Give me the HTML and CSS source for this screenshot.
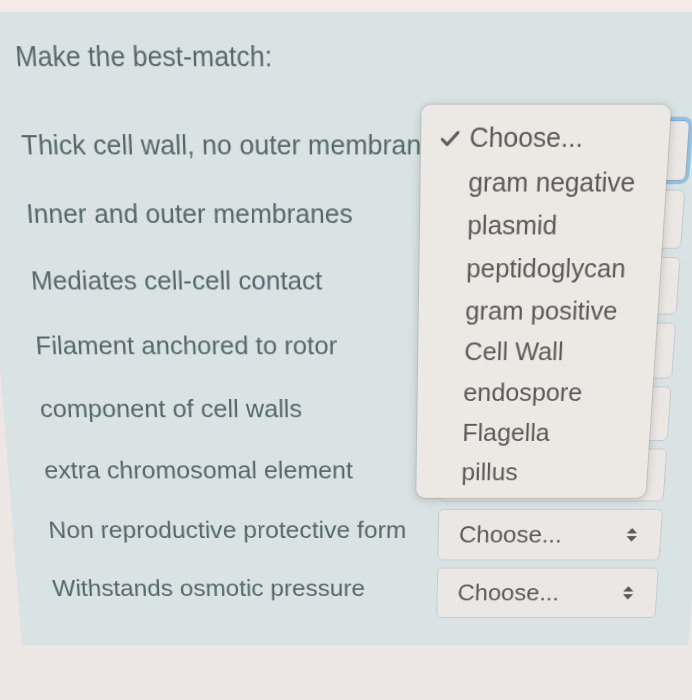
FILE: index.html
```html
<!DOCTYPE html>
<html lang="en">
<head>
<meta charset="utf-8">
<title>Make the best-match</title>
<link rel="stylesheet" href="styles.css">
</head>
<body>
<div class="screen">
<div class="panel">
  <h1 class="title">Make the best-match:</h1>
  <div class="rows">
    <div class="row">
      <span class="label">Thick cell wall, no outer membrane</span>
      <div class="select focused"><span>Choose...</span><svg class="arrows" viewBox="0 0 10 14"><path d="M5 0 L10 5.5 L0 5.5 Z M5 14 L10 8.5 L0 8.5 Z"/></svg></div>
    </div>
    <div class="row">
      <span class="label">Inner and outer membranes</span>
      <div class="select"><span>Choose...</span><svg class="arrows" viewBox="0 0 10 14"><path d="M5 0 L10 5.5 L0 5.5 Z M5 14 L10 8.5 L0 8.5 Z"/></svg></div>
    </div>
    <div class="row">
      <span class="label">Mediates cell-cell contact</span>
      <div class="select"><span>Choose...</span><svg class="arrows" viewBox="0 0 10 14"><path d="M5 0 L10 5.5 L0 5.5 Z M5 14 L10 8.5 L0 8.5 Z"/></svg></div>
    </div>
    <div class="row">
      <span class="label">Filament anchored to rotor</span>
      <div class="select"><span>Choose...</span><svg class="arrows" viewBox="0 0 10 14"><path d="M5 0 L10 5.5 L0 5.5 Z M5 14 L10 8.5 L0 8.5 Z"/></svg></div>
    </div>
    <div class="row">
      <span class="label">component of cell walls</span>
      <div class="select"><span>Choose...</span><svg class="arrows" viewBox="0 0 10 14"><path d="M5 0 L10 5.5 L0 5.5 Z M5 14 L10 8.5 L0 8.5 Z"/></svg></div>
    </div>
    <div class="row">
      <span class="label">extra chromosomal element</span>
      <div class="select"><span>Choose...</span><svg class="arrows" viewBox="0 0 10 14"><path d="M5 0 L10 5.5 L0 5.5 Z M5 14 L10 8.5 L0 8.5 Z"/></svg></div>
    </div>
    <div class="row">
      <span class="label">Non reproductive protective form</span>
      <div class="select"><span>Choose...</span><svg class="arrows" viewBox="0 0 10 14"><path d="M5 0 L10 5.5 L0 5.5 Z M5 14 L10 8.5 L0 8.5 Z"/></svg></div>
    </div>
    <div class="row">
      <span class="label">Withstands osmotic pressure</span>
      <div class="select"><span>Choose...</span><svg class="arrows" viewBox="0 0 10 14"><path d="M5 0 L10 5.5 L0 5.5 Z M5 14 L10 8.5 L0 8.5 Z"/></svg></div>
    </div>
  </div>
  <ul class="menu">
    <li class="checked"><svg class="check" viewBox="0 0 18 16"><path d="M2 8.5 L6.5 13 L16 2.5"/></svg>Choose...</li>
    <li>gram negative</li>
    <li>plasmid</li>
    <li>peptidoglycan</li>
    <li>gram positive</li>
    <li>Cell Wall</li>
    <li>endospore</li>
    <li>Flagella</li>
    <li>pillus</li>
  </ul>
</div>
</div>
</body>
</html>
```
FILE: styles.css
```css
html, body {
  margin: 0;
  padding: 0;
  overflow: hidden;
}
body {
  font-family: "Liberation Sans", Arial, sans-serif;
}
.screen {
  width: 692px;
  height: 700px;
  overflow: hidden;
  padding-top: 30px;
  box-sizing: border-box;
  background: linear-gradient(to bottom, #f4ebe8 0, #f4ebe8 20px, #ece7e4 20px);
}
.panel {
  position: relative;
  box-sizing: border-box;
  width: 710px;
  height: 640px;
  padding: 24px 37px 0 37px;
  background: #dae3e3;
  transform-origin: 355px 336px;
  transform: perspective(1000px) rotateX(-12.4deg);
}
.title {
  margin: 0;
  font-size: 25px;
  line-height: 30px;
  font-weight: normal;
  color: #56696d;
}
.rows {
  margin-top: 33.5px;
  display: flex;
  flex-direction: column;
}
.row {
  height: 65px;
  display: flex;
  align-items: center;
}
.label {
  flex: 1;
  min-width: 0;
  overflow: hidden;
  white-space: nowrap;
  font-size: 25.6px;
  color: #55686b;
}
.select {
  box-sizing: border-box;
  width: 232px;
  height: 57px;
  margin-top: 10px;
  flex: none;
  display: flex;
  align-items: center;
  justify-content: space-between;
  padding: 0 24px 0 21px;
  background: #ebe7e4;
  border: 1px solid #c4cbcb;
  border-radius: 6px;
  font-size: 25px;
  color: #585c5e;
}
.select.focused {
  box-shadow: 0 0 0 3px #93c1e0;
  border-color: #7fb0d6;
}
.arrows {
  width: 11px;
  height: 15px;
  fill: #565a5c;
}
.menu {
  position: absolute;
  left: 418px;
  top: 83px;
  width: 236px;
  height: 392px;
  box-sizing: border-box;
  margin: 0;
  padding: 10px 0 7px 0;
  list-style: none;
  background: #ece8e4;
  border-radius: 9px;
  box-shadow: 0 2px 10px rgba(60, 70, 70, 0.28), 0 0 0 1px rgba(150, 150, 150, 0.25);
}
.menu li {
  position: relative;
  height: 41.7px;
  line-height: 41.7px;
  padding-left: 46px;
  font-size: 25.3px;
  color: #5a5a5b;
  white-space: nowrap;
}
.check {
  position: absolute;
  left: 18px;
  top: 13px;
  width: 19px;
  height: 17px;
  fill: none;
  stroke: #5c5c5f;
  stroke-width: 2.8;
  stroke-linecap: round;
  stroke-linejoin: round;
}
```
